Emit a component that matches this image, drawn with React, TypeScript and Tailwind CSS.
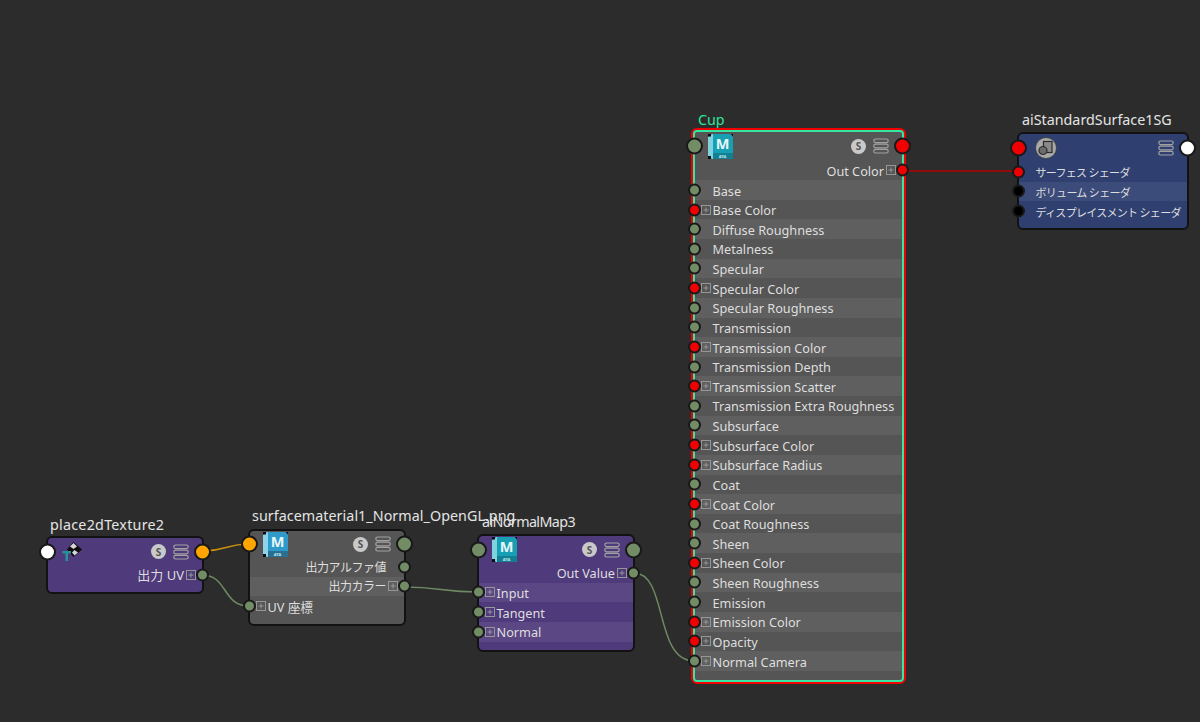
import React from "react";

const font = "font-['Noto_Sans','Noto_Sans_CJK_JP',sans-serif]";

type Tone = "green" | "red" | "black" | "orange" | "white";

const toneClass: Record<Tone, string> = {
  green: "bg-[#728c66]",
  red: "bg-[#f00000]",
  black: "bg-[#000000]",
  orange: "bg-[#ffa500]",
  white: "bg-[#ffffff]",
};

function Port({ tone, side, big }: { tone: Tone; side: "left" | "right"; big?: boolean }) {
  return (
    <span
      className={`absolute top-1/2 -translate-y-1/2 rounded-full border-2 border-[#191919] ${toneClass[tone]} ${
        big ? "h-[17px] w-[17px]" : "h-[13px] w-[13px]"
      } ${side === "left" ? (big ? "left-[-9px]" : "left-[-7px]") : big ? "right-[-9px]" : "right-[-7px]"}`}
    />
  );
}

function Plus() {
  return (
    <svg width="10" height="10" viewBox="0 0 10 10" className="shrink-0">
      <rect x="0.5" y="0.5" width="9" height="9" fill="none" stroke="#969696" />
      <path d="M5 2.500V7.500M2.500 5H7.500" stroke="#969696" />
    </svg>
  );
}

function SBadge() {
  return (
    <span className="flex h-[15px] w-[15px] items-center justify-center rounded-full bg-[#c9c9c9] text-[10px] font-bold leading-none text-[#555555]">
      S
    </span>
  );
}

function Stack() {
  return (
    <svg width="16" height="16" viewBox="0 0 16 16" fill="none" stroke="#a2a2a2" strokeWidth="1.2">
      <rect x="0.8" y="1" width="14.4" height="3.6" rx="1.8" />
      <rect x="0.8" y="6.2" width="14.4" height="3.6" rx="1.8" />
      <rect x="0.8" y="11.4" width="14.4" height="3.6" rx="1.8" />
    </svg>
  );
}

function MayaIcon({ body = "#17a0b4", band = "#127f92", spine = "#7fd2de" }: { body?: string; band?: string; spine?: string }) {
  return (
    <svg width="25" height="25" viewBox="0 0 25 25">
      <path d="M0 3L4 0H24V25H4L0 22Z" fill={spine} />
      <path d="M5 0H22.500L25 2.500V25H5Z" fill={body} />
      <path d="M5 19H25V25H5Z" fill={band} />
      <path d="M0 0H3V2.500L0 2.500ZM22.500 0H25V2.500ZM0 22H3V25H0Z" fill="#0b0f12" />
      <text x="14.500" y="15" textAnchor="middle" fontSize="14.500" fontWeight="700" fill="#e6f6f8" fontFamily="Noto Sans">
        M
      </text>
      <text x="14.500" y="23.500" textAnchor="middle" fontSize="4" fontWeight="700" fill="#bfe5ea" fontFamily="Noto Sans">
        AYA
      </text>
    </svg>
  );
}

function PlaceIcon() {
  return (
    <svg width="21" height="19" viewBox="0 0 21 19">
      <path d="M5 7.500L11.500 0L20 7.500L11.500 15Z" fill="#0c0c0c" />
      <path d="M11.500 1L15 4.500L11.500 7L8 4.500Z" fill="#d6d6d6" />
      <path d="M12.500 8L16 10.500L12.500 13.500L10 10.500Z" fill="#d6d6d6" />
      <path d="M0.500 9H9V11.500H6V19H3.500V11.500H0.500Z" fill="#25919b" />
    </svg>
  );
}

function ShadingIcon() {
  return (
    <svg width="22" height="22" viewBox="0 0 22 22">
      <circle cx="11" cy="11" r="10.500" fill="#a8a8a8" stroke="#3a3a3a" strokeWidth="0.800" />
      <rect x="8.500" y="4.500" width="8.500" height="11" fill="#8a8a8a" stroke="#2c2c2c" strokeWidth="1.200" />
      <circle cx="8" cy="13.500" r="4" fill="#6b6b6b" stroke="#2c2c2c" strokeWidth="1.200" />
    </svg>
  );
}

type RowDef = { label: string; tone?: Tone; plus?: boolean; out?: boolean };

function Row({ row, lit = "", labelClass = "" }: { row: RowDef; lit?: string; labelClass?: string }) {
  return (
    <div className={`relative flex h-[19.625px] items-center ${lit}`}>
      {row.out ? (
        <div className="flex w-full items-center justify-end pr-[6px]">
          <span className={`whitespace-nowrap pt-[2px] ${labelClass}`}>{row.label}</span>
          <span className="flex w-[12px] shrink-0 justify-end">{row.plus && <Plus />}</span>
        </div>
      ) : (
        <div className="flex items-center pl-[5.500px]">
          <span className="w-[12px] shrink-0">{row.plus && <Plus />}</span>
          <span className={`whitespace-nowrap pt-[2px] ${labelClass}`}>{row.label}</span>
        </div>
      )}
      {row.tone && <Port tone={row.tone} side={row.out ? "right" : "left"} />}
    </div>
  );
}

const cupInputs: RowDef[] = [
  { label: "Base", tone: "green" },
  { label: "Base Color", tone: "red", plus: true },
  { label: "Diffuse Roughness", tone: "green" },
  { label: "Metalness", tone: "green" },
  { label: "Specular", tone: "green" },
  { label: "Specular Color", tone: "red", plus: true },
  { label: "Specular Roughness", tone: "green" },
  { label: "Transmission", tone: "green" },
  { label: "Transmission Color", tone: "red", plus: true },
  { label: "Transmission Depth", tone: "green" },
  { label: "Transmission Scatter", tone: "red", plus: true },
  { label: "Transmission Extra Roughness", tone: "green" },
  { label: "Subsurface", tone: "green" },
  { label: "Subsurface Color", tone: "red", plus: true },
  { label: "Subsurface Radius", tone: "red", plus: true },
  { label: "Coat", tone: "green" },
  { label: "Coat Color", tone: "red", plus: true },
  { label: "Coat Roughness", tone: "green" },
  { label: "Sheen", tone: "green" },
  { label: "Sheen Color", tone: "red", plus: true },
  { label: "Sheen Roughness", tone: "green" },
  { label: "Emission", tone: "green" },
  { label: "Emission Color", tone: "red", plus: true },
  { label: "Opacity", tone: "red", plus: true },
  { label: "Normal Camera", tone: "green", plus: true },
];

function Header({
  icon,
  left,
  right,
  badge = true,
  height,
  pad = "pl-[13px]",
}: {
  icon: React.ReactNode;
  left: Tone;
  right: Tone;
  badge?: boolean;
  height: string;
  pad?: string;
}) {
  return (
    <div className={`relative flex items-center justify-between pr-[13px] ${height} ${pad}`}>
      <Port tone={left} side="left" big />
      {icon}
      <div className="flex items-center gap-[7px]">
        {badge && <SBadge />}
        <Stack />
      </div>
      <Port tone={right} side="right" big />
    </div>
  );
}

const title = "absolute text-[14.300px] leading-none text-[#e4e4e4]";
const nodeBox = "absolute rounded-[6px] border-2 border-[#121212]";
const jp = "text-[12px] tracking-[-0.5px]";
const jpSg = "ml-[-1px] text-[11px] tracking-[-0.7px]";

export default function App() {
  return (
    <div
      className={`relative h-[722px] w-[1200px] overflow-hidden bg-[#2c2c2c] text-[12.700px] leading-none text-[#dedede] ${font}`}
    >
      {/* connection wires */}
      <svg width="1200" height="722" className="absolute left-0 top-0" fill="none" strokeWidth="1.5">
        <path d="M905 171H1019" stroke="#b30000" />
        <path d="M203 551C226 551 226 544 249 544" stroke="#c9930f" />
        <path d="M202 575C228 575 222 606 249 606" stroke="#6f8a63" />
        <path d="M404 587C440 587 442 592 478 592" stroke="#6f8a63" />
        <path d="M634 573C668 573 654 661 694 661" stroke="#6f8a63" />
      </svg>

      {/* place2dTexture2 */}
      <div className={`${title} left-[50px] top-[518px] tracking-[0.25px]`}>place2dTexture2</div>
      <div className={`${nodeBox} left-[46px] top-[536px] h-[58px] w-[158px] bg-[#4f3a7b]`}>
        <Header icon={<PlaceIcon />} left="white" right="orange" height="h-[27px]" pad="pl-[14px]" />
        <Row row={{ label: "出力 UV", tone: "green", plus: true, out: true }} labelClass="text-[13px]" />
      </div>

      {/* surfacematerial1_Normal_OpenGL.png */}
      <div className={`${nodeBox} left-[248px] top-[529px] h-[97px] w-[158px] bg-[#555555]`}>
        <Header
          icon={<MayaIcon body="#2f9bcb" band="#2a6f92" spine="#8fd3ea" />}
          left="orange"
          right="green"
          height="h-[26px]"
        />
        <Row row={{ label: "出力アルファ値", tone: "green", out: true }} labelClass={jp} />
        <Row row={{ label: "出力カラー", tone: "green", plus: true, out: true }} lit="bg-[#5f5f5f]" labelClass={jp} />
        <Row row={{ label: "UV 座標", tone: "green", plus: true }} />
      </div>
      <div className={`${title} left-[252px] top-[509px] tracking-[0.05px]`}>surfacematerial1_Normal_OpenGL.png</div>

      {/* aiNormalMap3 */}
      <div className={`${nodeBox} left-[477px] top-[534px] h-[118px] w-[158px] bg-[#4f3a7b]`}>
        <Header icon={<MayaIcon />} left="green" right="green" height="h-[27px]" />
        <Row row={{ label: "Out Value", tone: "green", plus: true, out: true }} />
        <Row row={{ label: "Input", tone: "green", plus: true }} lit="bg-[#5c4785]" />
        <Row row={{ label: "Tangent", tone: "green", plus: true }} />
        <Row row={{ label: "Normal", tone: "green", plus: true }} lit="bg-[#5c4785]" />
      </div>
      <div className={`${title} left-[482px] top-[515px] tracking-[-0.6px]`}>aiNormalMap3</div>

      {/* Cup */}
      <div className={`${title} left-[698px] top-[113px] !text-[#2fe39c]`}>Cup</div>
      <div className="absolute left-[691px] top-[128px] h-[556px] w-[215px] rounded-[6px] border-[2.500px] border-[#f00000]">
        <div className="h-full w-full rounded-[4px] border-[2px] border-[#37e6a3] bg-[#555555]">
          <Header icon={<MayaIcon />} left="green" right="red" height="h-[28.500px]" />
          <Row row={{ label: "Out Color", tone: "red", plus: true, out: true }} />
          {cupInputs.map((row, i) => (
            <Row key={row.label} row={row} lit={i % 2 === 0 ? "bg-[#5f5f5f]" : ""} />
          ))}
        </div>
      </div>

      {/* aiStandardSurface1SG */}
      <div className={`${title} left-[1022px] top-[113px]`}>aiStandardSurface1SG</div>
      <div className={`${nodeBox} left-[1017px] top-[132px] h-[98px] w-[172px] bg-[#2f4070]`}>
        <Header icon={<ShadingIcon />} left="red" right="white" badge={false} height="h-[28px]" pad="pl-[16px]" />
        <Row row={{ label: "サーフェス シェーダ", tone: "red" }} labelClass={jpSg} />
        <Row row={{ label: "ボリューム シェーダ", tone: "black" }} lit="bg-[#3c4c7a]" labelClass={jpSg} />
        <Row row={{ label: "ディスプレイスメント シェーダ", tone: "black" }} labelClass={jpSg} />
      </div>
    </div>
  );
}
